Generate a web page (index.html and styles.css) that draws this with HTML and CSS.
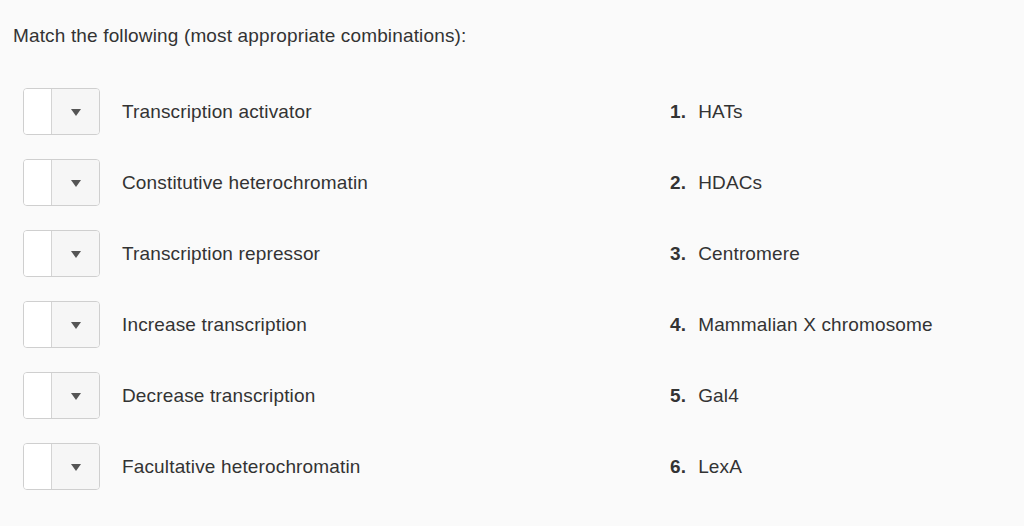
FILE: index.html
```html
<!DOCTYPE html>
<html>
<head>
<meta charset="utf-8">
<link rel="stylesheet" href="styles.css">
</head>
<body>
<div class="page">
  <p class="title">Match the following (most appropriate combinations):</p>
  <div class="rows">
    <div class="row">
      <div class="select"><span class="field"></span><span class="arrow"><span class="tri"></span></span></div>
      <span class="label">Transcription activator</span>
      <span class="option"><b>1</b><span class="dot">.</span>HATs</span>
    </div>
    <div class="row">
      <div class="select"><span class="field"></span><span class="arrow"><span class="tri"></span></span></div>
      <span class="label">Constitutive heterochromatin</span>
      <span class="option"><b>2</b><span class="dot">.</span>HDACs</span>
    </div>
    <div class="row">
      <div class="select"><span class="field"></span><span class="arrow"><span class="tri"></span></span></div>
      <span class="label">Transcription repressor</span>
      <span class="option"><b>3</b><span class="dot">.</span>Centromere</span>
    </div>
    <div class="row">
      <div class="select"><span class="field"></span><span class="arrow"><span class="tri"></span></span></div>
      <span class="label">Increase transcription</span>
      <span class="option"><b>4</b><span class="dot">.</span>Mammalian X chromosome</span>
    </div>
    <div class="row">
      <div class="select"><span class="field"></span><span class="arrow"><span class="tri"></span></span></div>
      <span class="label">Decrease transcription</span>
      <span class="option"><b>5</b><span class="dot">.</span>Gal4</span>
    </div>
    <div class="row">
      <div class="select"><span class="field"></span><span class="arrow"><span class="tri"></span></span></div>
      <span class="label">Facultative heterochromatin</span>
      <span class="option"><b>6</b><span class="dot">.</span>LexA</span>
    </div>
  </div>
</div>
</body>
</html>
```

FILE: styles.css
```css
html, body {
  margin: 0;
  padding: 0;
  background: #fafafa;
}
.page {
  font-family: "Liberation Sans", Arial, sans-serif;
  font-size: 19px;
  letter-spacing: 0.15px;
  color: #333;
  padding: 26px 0 0 13px;
}
.title {
  margin: 0;
  line-height: 20px;
}
.rows {
  display: flex;
  flex-direction: column;
  gap: 24px;
  margin-top: 42px;
  padding-left: 10px;
}
.row {
  display: flex;
  align-items: center;
  height: 47px;
}
.select {
  display: flex;
  width: 75px;
  height: 45px;
  border: 1px solid #cfcfcf;
  border-radius: 4px;
  overflow: hidden;
  flex: none;
}
.field {
  width: 27px;
  background: #fff;
  border-right: 1px solid #d4d4d4;
}
.arrow {
  flex: 1;
  background: #f6f6f6;
  display: flex;
  align-items: center;
  justify-content: center;
}
.tri {
  width: 0;
  height: 0;
  border-left: 5px solid transparent;
  border-right: 5px solid transparent;
  border-top: 7px solid #555;
  margin-top: 1px;
  margin-left: 1px;
}
.label {
  margin-left: 22px;
  width: 548px;
  flex: none;
}
.option {
  white-space: nowrap;
}
.option b {
  font-weight: bold;
}
.dot {
  font-weight: bold;
  margin-right: 12px;
}
```
